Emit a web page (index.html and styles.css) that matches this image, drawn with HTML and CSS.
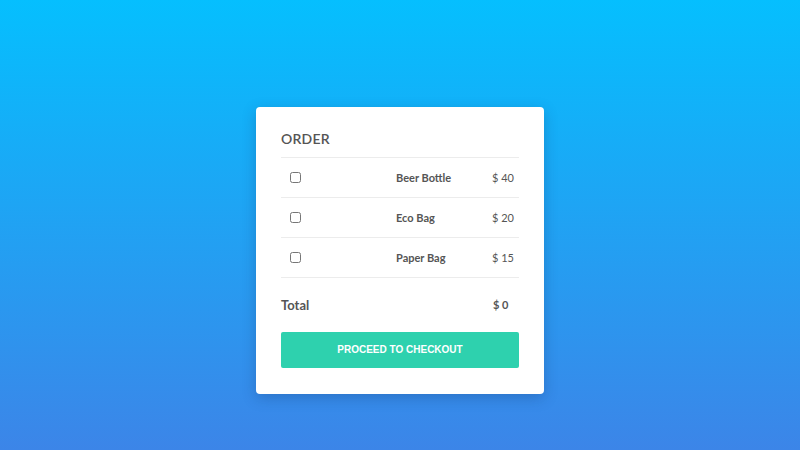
FILE: index.html
```html
<!DOCTYPE html>
<html lang="en">
<head>
<meta charset="utf-8">
<title>Order</title>
<link rel="stylesheet" href="styles.css">
</head>
<body>
<main class="page">
  <section class="card">
    <h2 class="card-title">ORDER</h2>
    <ul class="items">
      <li class="item">
        <span class="item-check"><input type="checkbox"></span>
        <span class="item-name">Beer Bottle</span>
        <span class="item-price">$ 40</span>
      </li>
      <li class="item">
        <span class="item-check"><input type="checkbox"></span>
        <span class="item-name">Eco Bag</span>
        <span class="item-price">$ 20</span>
      </li>
      <li class="item">
        <span class="item-check"><input type="checkbox"></span>
        <span class="item-name">Paper Bag</span>
        <span class="item-price">$ 15</span>
      </li>
    </ul>
    <div class="total">
      <span class="total-label">Total</span>
      <span class="total-value">$ 0</span>
    </div>
    <button class="checkout" type="button">PROCEED TO CHECKOUT</button>
  </section>
</main>
</body>
</html>
```
FILE: styles.css
```css
html, body {
  margin: 0;
  height: 100%;
}

body {
  background: linear-gradient(180deg, #05bffe 0%, #3c85e8 100%);
  font-family: "Lato", "Noto Sans", sans-serif;
  color: #555;
}

.page {
  box-sizing: border-box;
  height: 100%;
  padding-top: 50px;
  display: flex;
  align-items: center;
  justify-content: center;
}

.card {
  width: 238px;
  padding: 22px 25px 25px;
  background: #fff;
  border-radius: 4px;
  box-shadow: 0 4px 14px rgba(20, 40, 90, 0.25);
}

.card-title {
  margin: 0;
  font-size: 14px;
  font-weight: 600;
  letter-spacing: 0.2px;
  line-height: 20px;
  padding-bottom: 8px;
  color: #555;
}

.items {
  list-style: none;
  margin: 0;
  padding: 0;
  border-top: 1px solid #ececec;
}

.item {
  display: flex;
  align-items: center;
  height: 39px;
  border-bottom: 1px solid #ececec;
  font-size: 11px;
}

.item-check {
  width: 115px;
  padding-left: 9px;
  box-sizing: border-box;
  display: flex;
}

.item-check input {
  margin: 0;
  width: 11px;
  height: 11px;
}

.item-name {
  flex: 1;
  font-weight: 700;
  color: #555;
}

.item-price {
  padding-right: 5px;
  font-size: 11px;
  color: #555;
}

.total {
  display: flex;
  align-items: center;
  justify-content: space-between;
  height: 54px;
  font-weight: 700;
}

.total-label {
  font-size: 13px;
}

.total-value {
  width: 26px;
  font-size: 11px;
}

.checkout {
  display: block;
  width: 100%;
  height: 36px;
  margin-bottom: 1px;
  border: 0;
  border-radius: 2px;
  background: #2ed1ae;
  color: #fff;
  font-family: "Liberation Sans", Arial, sans-serif;
  font-size: 10px;
  font-weight: 700;
  cursor: pointer;
}
```
